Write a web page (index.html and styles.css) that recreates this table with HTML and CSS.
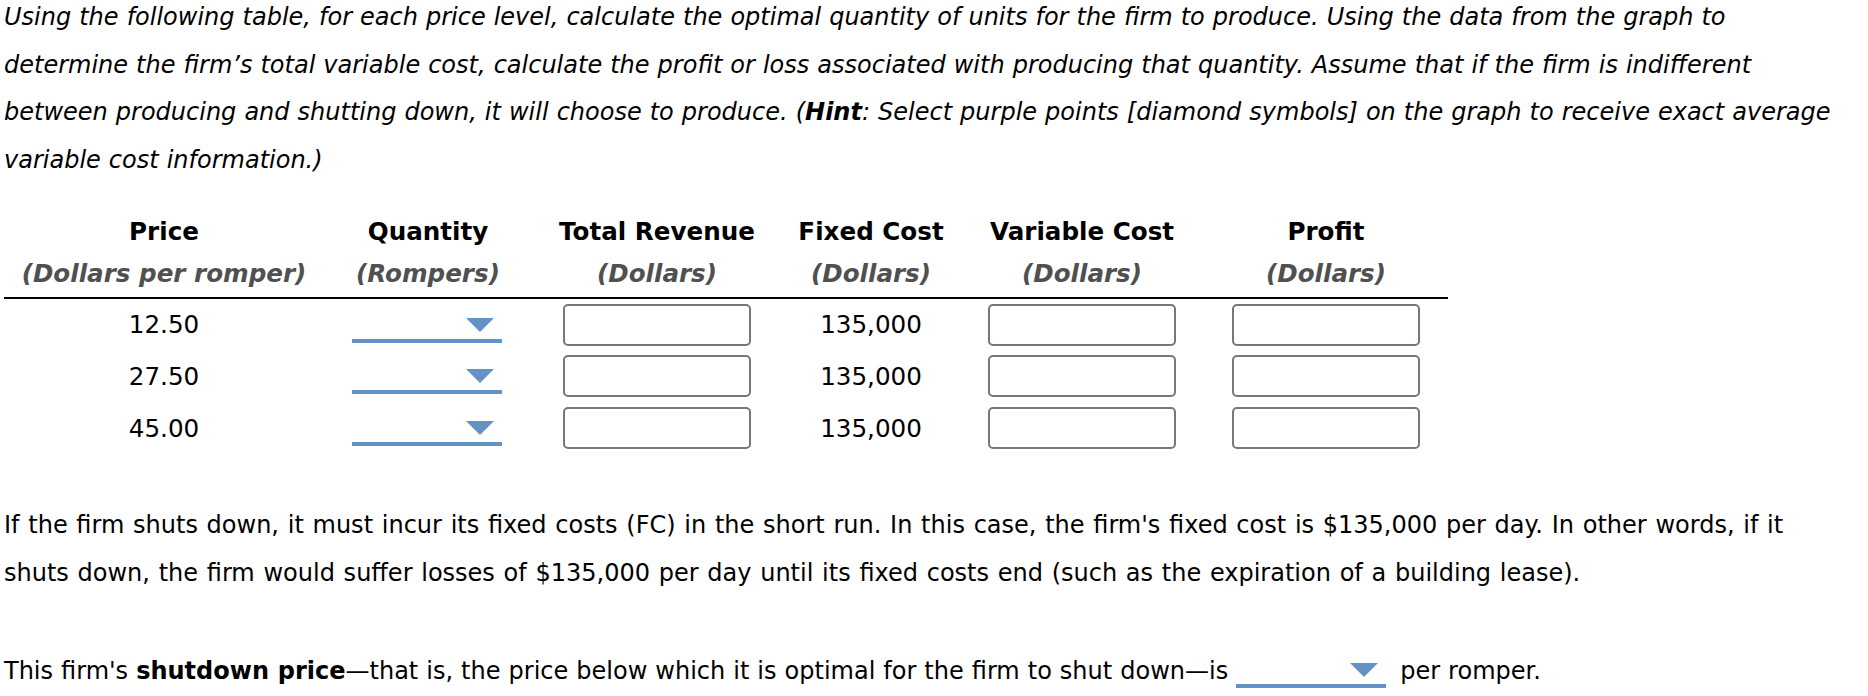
FILE: index.html
```html
<!DOCTYPE html>
<html lang="en">
<head>
<meta charset="utf-8">
<title>Shutdown price</title>
<link rel="stylesheet" href="styles.css">
</head>
<body>
<div class="page">
  <p class="intro">Using the following table, for each price level, calculate the optimal quantity of units for the firm to produce. Using the data from the graph to determine the firm’s total variable cost, calculate the profit or loss associated with producing that quantity. Assume that if the firm is indifferent between producing and shutting down, it will choose to produce. (<b>Hint</b>: Select purple points [diamond symbols] on the graph to receive exact average variable cost information.)</p>

  <table class="grid">
    <colgroup>
      <col class="c1"><col class="c2"><col class="c3"><col class="c4"><col class="c5"><col class="c6">
    </colgroup>
    <thead>
      <tr>
        <th>Price<div class="unit">(Dollars per romper)</div></th>
        <th>Quantity<div class="unit">(Rompers)</div></th>
        <th>Total Revenue<div class="unit">(Dollars)</div></th>
        <th>Fixed Cost<div class="unit">(Dollars)</div></th>
        <th>Variable Cost<div class="unit">(Dollars)</div></th>
        <th>Profit<div class="unit">(Dollars)</div></th>
      </tr>
    </thead>
    <tbody>
      <tr>
        <td>12.50</td>
        <td class="qcell"><span class="dropdown"><svg class="caret" width="28" height="14" viewBox="0 0 28 14"><polygon points="0,0 28,0 14,14" fill="#6392c4"/></svg></span></td>
        <td><span class="box"></span></td>
        <td>135,000</td>
        <td><span class="box"></span></td>
        <td><span class="box"></span></td>
      </tr>
      <tr>
        <td>27.50</td>
        <td class="qcell"><span class="dropdown"><svg class="caret" width="28" height="14" viewBox="0 0 28 14"><polygon points="0,0 28,0 14,14" fill="#6392c4"/></svg></span></td>
        <td><span class="box"></span></td>
        <td>135,000</td>
        <td><span class="box"></span></td>
        <td><span class="box"></span></td>
      </tr>
      <tr>
        <td>45.00</td>
        <td class="qcell"><span class="dropdown"><svg class="caret" width="28" height="14" viewBox="0 0 28 14"><polygon points="0,0 28,0 14,14" fill="#6392c4"/></svg></span></td>
        <td><span class="box"></span></td>
        <td>135,000</td>
        <td><span class="box"></span></td>
        <td><span class="box"></span></td>
      </tr>
    </tbody>
  </table>

  <p class="para note">If the firm shuts down, it must incur its fixed costs (FC) in the short run. In this case, the firm's fixed cost is $135,000 per day. In other words, if it shuts down, the firm would suffer losses of $135,000 per day until its fixed costs end (such as the expiration of a building lease).</p>

  <p class="para last">This firm's <b>shutdown price</b>—that is, the price below which it is optimal for the firm to shut down—is <span class="dropdown inline"><svg class="caret" width="28" height="14" viewBox="0 0 28 14"><polygon points="0,0 28,0 14,14" fill="#6392c4"/></svg></span> per romper.</p>
</div>
</body>
</html>
```

FILE: styles.css
```css
html, body {
  margin: 0;
  padding: 0;
  background: #ffffff;
}

body {
  font-family: "DejaVu Sans", Verdana, sans-serif;
  font-size: 24.6px;
  color: #000000;
  overflow: hidden;
}

.page {
  padding: 0 18px 0 4px;
  height: 696px;
}

.intro {
  margin: -6px 0 0 0;
  font-size: 24px;
  word-spacing: 0.4px;
  line-height: 47.5px;
  font-style: italic;
}

.intro b {
  font-weight: bold;
}

.grid {
  margin-top: 27px;
  border-collapse: collapse;
  table-layout: fixed;
  width: 1444px;
}

.c1 { width: 320px; }
.c2 { width: 208px; }
.c3 { width: 250px; }
.c4 { width: 178px; }
.c5 { width: 244px; }
.c6 { width: 244px; }

.grid th {
  font-weight: bold;
  line-height: 42px;
  padding: 0 0 2px 0;
  text-align: center;
  border-bottom: 2px solid #000000;
  white-space: nowrap;
}

.unit {
  font-style: italic;
  color: #505050;
}

.grid tbody tr {
  height: 52px;
}

.grid td {
  padding: 0;
  text-align: center;
  vertical-align: middle;
  line-height: 27px;
}

.grid td.qcell {
  vertical-align: top;
  padding-top: 13px;
  text-align: left;
  padding-left: 28px;
}

.box {
  display: block;
  width: 188px;
  height: 42px;
  margin: 0 auto;
  box-sizing: border-box;
  border: 2px solid #777777;
  border-radius: 5px;
  background: #ffffff;
}

.dropdown {
  display: inline-block;
  width: 150px;
  height: 21px;
  border-bottom: 4px solid #6392c4;
  vertical-align: -9px;
}

.caret {
  display: block;
  margin: 0 8px 0 auto;
}

.dropdown.inline {
  margin: 0 6px 0 0;
}

.para {
  margin: 47px 0 0 0;
  font-size: 24px;
  line-height: 48px;
}

.para.note {
  word-spacing: 1.1px;
}

.para.last {
  margin-top: 50px;
  word-spacing: 0.4px;
}

.para b {
  font-weight: bold;
}
```
